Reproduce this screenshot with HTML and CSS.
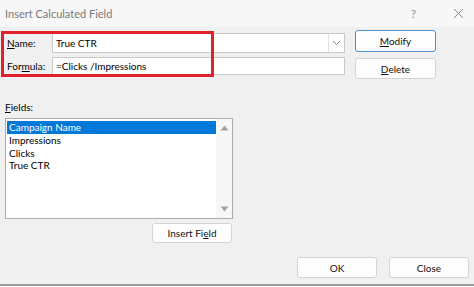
FILE: index.html
```html
<!DOCTYPE html>
<html lang="en">
<head>
    <meta charset="UTF-8">
    <title>Insert Calculated Field</title>
    <link rel="stylesheet" href="styles.css">
</head>
<body>
    <div class="dialog">
        <div class="titlebar">
            <span class="title">Insert Calculated Field</span>
            <span class="title-help">?</span>
            <span class="title-close">
                <svg width="11" height="11" viewBox="0 0 11 11"><path d="M1 1 L10 10 M10 1 L1 10" stroke="#8a8a8a" stroke-width="1"/></svg>
            </span>
        </div>

        <div class="top">
            <div class="form">
                <div class="row row-name">
                    <label class="label"><u>N</u>ame:</label>
                    <div class="combo">
                        <span class="combo-text">True CTR</span>
                        <span class="combo-btn">
                            <svg width="9" height="6" viewBox="0 0 9 6"><path d="M1 1 L4.5 4.5 L8 1" fill="none" stroke="#8a8a8a" stroke-width="1"/></svg>
                        </span>
                    </div>
                </div>
                <div class="row row-formula">
                    <label class="label">For<u>m</u>ula:</label>
                    <div class="textbox">=Clicks /Impressions</div>
                </div>
                <!-- annotation drawn over the screenshot -->
                <div class="highlight"></div>
            </div>
            <div class="side">
                <button class="btn btn-default btn-modify"><u>M</u>odify</button>
                <button class="btn btn-delete"><u>D</u>elete</button>
            </div>
        </div>

        <div class="fields-label"><u>F</u>ields:</div>
        <div class="listbox">
            <ul class="list">
                <li class="selected">Campaign Name</li>
                <li>Impressions</li>
                <li>Clicks</li>
                <li>True CTR</li>
            </ul>
            <div class="scrollbar">
                <svg width="9" height="6" viewBox="0 0 9 6"><path d="M0.5 5.5 L4.5 0.5 L8.5 5.5 Z" fill="#a3a3a3"/></svg>
                <svg width="9" height="6" viewBox="0 0 9 6"><path d="M0.5 0.5 L4.5 5.5 L8.5 0.5 Z" fill="#a3a3a3"/></svg>
            </div>
        </div>
        <button class="btn btn-insert">Insert Fi<u>e</u>ld</button>

        <div class="footer">
            <button class="btn btn-ok">OK</button>
            <button class="btn btn-close">Close</button>
        </div>
    </div>
</body>
</html>
```

FILE: styles.css
```css
* {
    margin: 0;
    padding: 0;
    box-sizing: border-box;
}

body {
    font-family: Lato, 'Noto Sans', Arial, sans-serif;
    font-size: 10px;
    color: #111;
    background: #fff;
    width: 474px;
    height: 287px;
    overflow: hidden;
}

u {
    text-underline-offset: 1px;
}

.dialog {
    height: 286px;
    background: #f0f0f0;
    border-bottom: 2px solid #9c9c9c;
}

.titlebar {
    height: 27px;
    background: #f7f7f7;
    display: flex;
    align-items: center;
    padding-left: 5px;
    color: #7a7a7a;
    font-size: 11px;
}

.title {
    flex: 1;
}

.title-help {
    width: 10px;
    margin-right: 32px;
    color: #8a8a8a;
}

.title-close {
    display: flex;
    margin-right: 10px;
}

.top {
    display: flex;
    margin-top: 3px;
    height: 50px;
}

.form {
    position: relative;
    width: 345px;
}

.row {
    display: flex;
    align-items: center;
}

.row-name {
    margin-top: 3px;
    height: 20px;
}

.row-formula {
    margin-top: 4px;
    height: 18px;
}

.label {
    width: 52px;
    padding-left: 7px;
    color: #000;
}

.combo,
.textbox {
    flex: 1;
    height: 100%;
    background: #fff;
    border: 1px solid #c9c9c9;
    display: flex;
    align-items: center;
    padding-left: 3px;
    color: #000;
}

.combo-text {
    flex: 1;
}

.combo-btn {
    width: 16px;
    height: 100%;
    border-left: 1px solid #e2e2e2;
    display: flex;
    align-items: center;
    justify-content: center;
}

.highlight {
    position: absolute;
    left: 1px;
    top: 1px;
    width: 213px;
    height: 46px;
    border: 3px solid #e2202b;
}

.side {
    margin-left: 10px;
    width: 81px;
    display: flex;
    flex-direction: column;
}

.btn {
    font-family: inherit;
    font-size: 10px;
    color: #111;
    background: #fdfdfd;
    border: 1px solid #d3d3d3;
    border-radius: 3px;
    display: block;
}

.btn-modify {
    height: 22px;
}

.btn-default {
    border-color: #4d8fcc;
}

.btn-delete {
    margin-top: 6px;
    height: 21px;
}

.fields-label {
    margin-top: 21px;
    padding-left: 5px;
    height: 14px;
    color: #000;
}

.listbox {
    margin: 3px 0 0 5px;
    width: 228px;
    height: 101px;
    background: #fff;
    border: 1px solid #ababab;
    display: flex;
}

.list {
    list-style: none;
    flex: 1;
    padding: 2px 0 0 1px;
}

.list li {
    height: 12.5px;
    line-height: 12.5px;
    padding-left: 2px;
    color: #000;
}

.list li.selected {
    background: #0078d7;
    color: #fff;
    height: 13px;
}

.scrollbar {
    width: 16px;
    background: #f7f7f7;
    display: flex;
    flex-direction: column;
    justify-content: space-between;
    align-items: center;
    padding: 6px 0 6px;
}

.btn-insert {
    margin: 4px 0 0 152px;
    width: 80px;
    height: 20px;
}

.footer {
    display: flex;
    justify-content: flex-end;
    gap: 12px;
    margin-top: 14px;
    padding-right: 5px;
}

.btn-ok,
.btn-close {
    width: 80px;
    height: 21px;
}
```
